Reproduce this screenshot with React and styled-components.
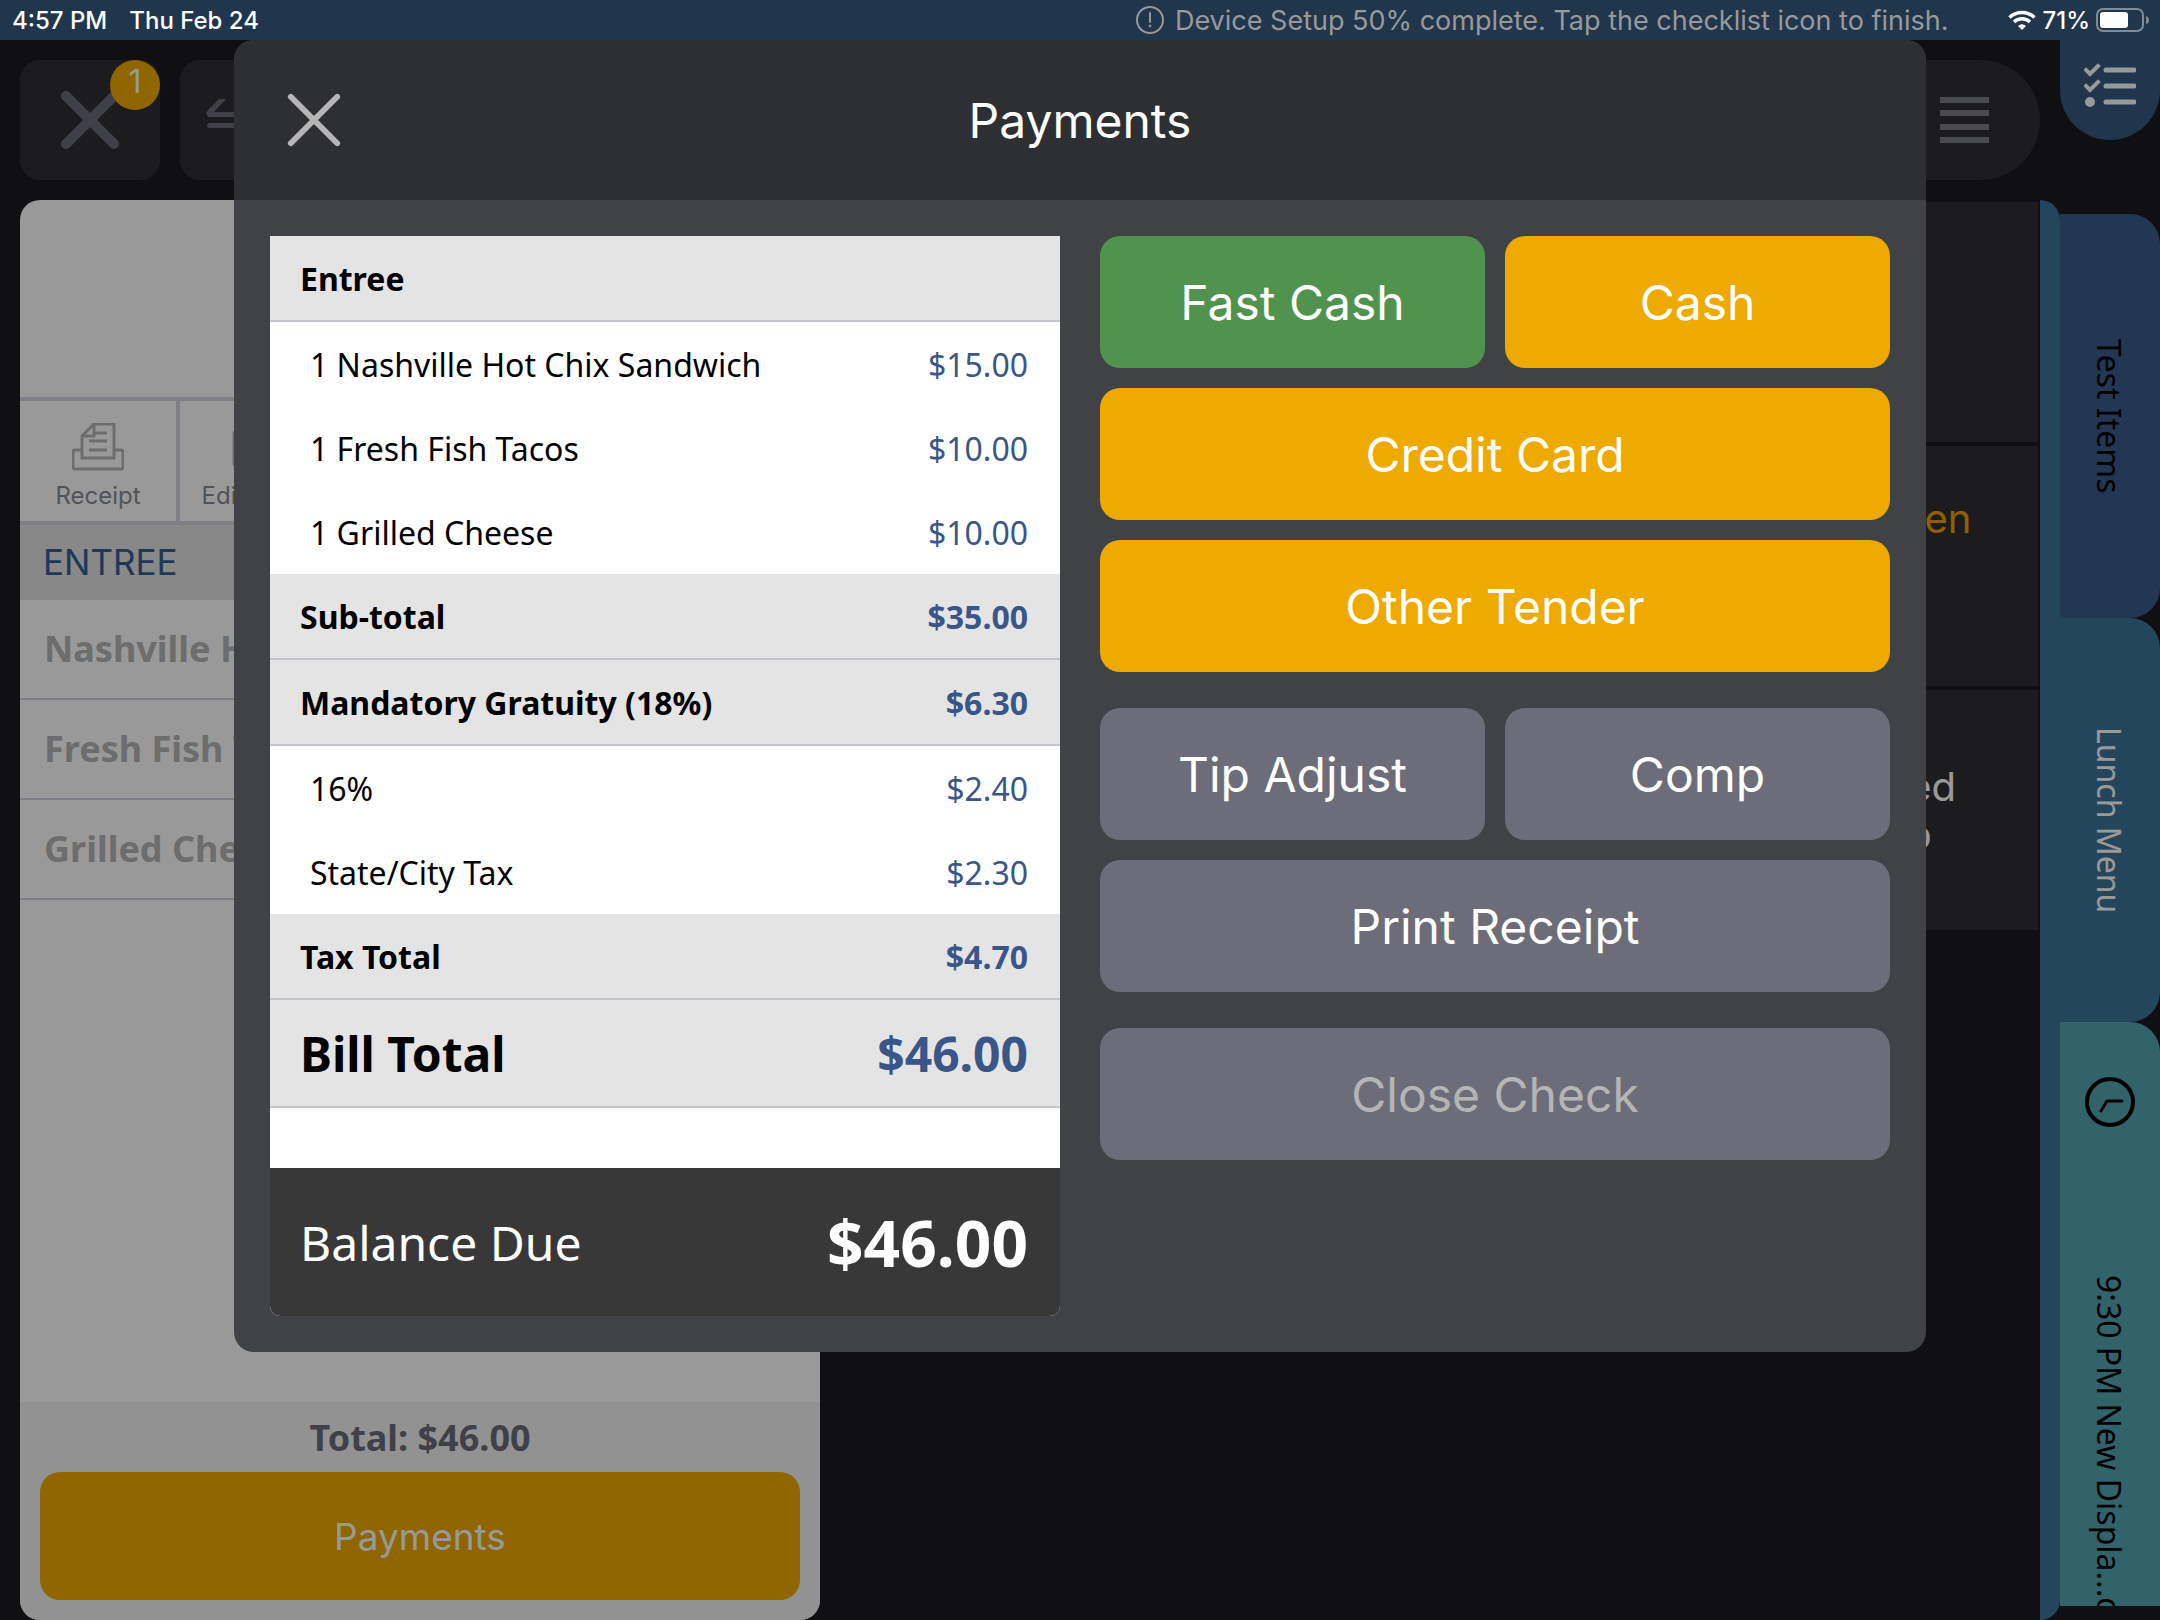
import styled, { createGlobalStyle } from "styled-components";

const GlobalStyle = createGlobalStyle`
  * {
    box-sizing: border-box;
  }

  body {
    margin: 0;
    background: #1b1b1e;
    font-family: Inter, "Liberation Sans", sans-serif;
  }

  button {
    font-family: inherit;
    padding: 0;
    border: 0;
    cursor: pointer;
  }
`;

const Screen = styled.div`
  display: flex;
  flex-direction: column;
  height: 100vh;
  overflow: hidden;
`;

const StatusBar = styled.header`
  position: relative;
  z-index: 2;
  display: flex;
  align-items: center;
  flex: none;
  height: 40px;
  padding: 0 10px 0 12px;
  background: #1f364d;
  color: #fff;
  font-size: 24px;
  font-weight: 500;
`;

const StatusDate = styled.span`
  margin-left: 22px;
`;

const StatusMessage = styled.div`
  display: flex;
  align-items: center;
  gap: 10px;
  margin-left: auto;
  color: #999;
  font-size: 27px;
  font-weight: 400;
`;

const StatusIcons = styled.div`
  display: flex;
  align-items: center;
  gap: 6px;
  margin-left: 60px;
`;

const Workspace = styled.div`
  display: flex;
  flex: 1;
  min-height: 0;
`;

const Main = styled.main`
  display: flex;
  flex-direction: column;
  flex: 1;
  gap: 20px;
  padding: 20px 0 0 20px;
`;

const Toolbar = styled.div`
  display: flex;
  gap: 20px;
  height: 120px;
`;

const ToolButton = styled.button`
  position: relative;
  display: flex;
  align-items: center;
  justify-content: center;
  width: 140px;
  border-radius: 20px;
  background: #2f2f32;
`;

const MenuButton = styled(ToolButton)`
  width: 160px;
  margin-left: auto;
  padding-left: 8px;
  border-radius: 0 60px 60px 0;
`;

const Badge = styled.span`
  position: absolute;
  top: 0;
  right: 0;
  width: 50px;
  height: 50px;
  border-radius: 50%;
  background: #eeaa00;
  color: #fff;
  font-size: 32px;
  line-height: 44px;
`;

const Columns = styled.div`
  display: flex;
  flex: 1;
  gap: 20px;
  min-height: 0;
`;

const Ticket = styled.section`
  display: flex;
  flex-direction: column;
  width: 800px;
  border-radius: 20px;
  overflow: hidden;
  background: #fff;
`;

const TicketHead = styled.div`
  height: 197px;
`;

const TicketActions = styled.div`
  display: grid;
  grid-template-columns: repeat(5, 1fr);
  height: 128px;
  border: solid #d4d4df;
  border-width: 4px 0;
`;

const TicketAction = styled.button`
  display: flex;
  flex-direction: column;
  align-items: center;
  justify-content: flex-end;
  gap: 10px;
  padding-bottom: 10px;
  border-right: 4px solid #d4d4df;
  background: none;
  color: #8a8b96;
  font-size: 24px;
  line-height: 30px;
`;

const TicketCategory = styled.h2`
  margin: 0;
  padding-left: 23px;
  background: #e3e3e3;
  color: #345f8e;
  font-size: 35px;
  font-weight: 400;
  line-height: 75px;
`;

const TicketList = styled.ul`
  flex: 1;
  margin: 0;
  padding: 0;
  list-style: none;
`;

const TicketItem = styled.li`
  padding-left: 24px;
  border-bottom: 2px solid #d4d4df;
  color: #b6b6b6;
  font: bold 36px/98px "Noto Sans", sans-serif;
`;

const TicketFooter = styled.div`
  padding: 2px 20px 20px;
  background: #f3f3f3;
`;

const TicketTotal = styled.div`
  color: #6c6d78;
  font: bold 36px/68px "Noto Sans", sans-serif;
  text-align: center;
`;

const BigButton = styled.button`
  height: ${({ $small }) => ($small ? 128 : 132)}px;
  width: 100%;
  border-radius: 20px;
  background: ${({ $color }) => $color};
  color: ${({ disabled }) => (disabled ? "#b5b5b5" : "#fff")};
  font-size: ${({ $small }) => ($small ? 37 : 48)}px;
  grid-column: ${({ $wide }) => ($wide ? "span 2" : "auto")};
`;

const MenuGrid = styled.div`
  display: grid;
  flex: 1;
  grid-template-columns: repeat(4, 1fr);
  grid-auto-rows: 240px;
  gap: 4px;
  align-content: start;
  padding: 2px 2px 0 40px;
`;

const MenuTile = styled.button`
  padding-top: 2px;
  background: #2f2f32;
  color: ${({ $highlight }) => ($highlight ? "#ee9e00" : "#fff")};
  font-size: 40px;
  line-height: 48px;
  white-space: pre-line;
`;

const Rail = styled.div`
  width: 20px;
  margin-top: 160px;
  border-radius: 0 20px 20px 0;
  background: #3c7599;
`;

const Side = styled.aside`
  display: flex;
  flex-direction: column;
  width: 100px;
  padding-bottom: 14px;
`;

const ChecklistButton = styled.button`
  flex: none;
  height: 100px;
  margin-bottom: 74px;
  padding-bottom: 8px;
  border-radius: 0 0 50px 50px;
  background: #345a80;
`;

const TabList = styled.nav`
  flex: 1;
  min-height: 0;
  overflow: hidden;
`;

const Tab = styled.button`
  display: flex;
  align-items: center;
  justify-content: ${({ $long }) => ($long ? "flex-start" : "center")};
  gap: 148px;
  width: 100%;
  height: ${({ $long }) => ($long ? 740 : 404)}px;
  padding-top: ${({ $long }) => ($long ? 55 : 0)}px;
  border-radius: 0 30px 30px 0;
  background: ${({ $color }) => $color};
  color: ${({ $dark }) => ($dark ? "#000" : "#fff")};
  font: 32px/44px "Noto Sans", sans-serif;
  flex-direction: column;

  span {
    padding-right: 2px;
    writing-mode: vertical-rl;
    white-space: nowrap;
  }
`;

const Overlay = styled.div`
  position: fixed;
  inset: 0;
  padding: 40px 234px 0;
  background: rgba(0, 0, 0, 0.4);
`;

const Modal = styled.section`
  border-radius: 20px;
  overflow: hidden;
  background: #414246;
`;

const ModalHeader = styled.div`
  display: grid;
  grid-template-columns: 160px 1fr 160px;
  align-items: center;
  height: 160px;
  background: #2e2f32;
`;

const CloseButton = styled.button`
  display: flex;
  align-items: center;
  justify-content: center;
  height: 100%;
  background: none;
`;

const ModalTitle = styled.h1`
  margin: 0;
  color: #fff;
  font-size: 48px;
  font-weight: 400;
  text-align: center;
`;

const ModalBody = styled.div`
  display: grid;
  grid-template-columns: 1fr 1fr;
  gap: 40px;
  padding: 36px;
`;

const Receipt = styled.div`
  border-radius: 0 0 10px 10px;
  overflow: hidden;
  background: #fff;
  font-family: "Noto Sans", sans-serif;
`;

const ReceiptTable = styled.table`
  width: 100%;
  margin-bottom: 60px;
  border-spacing: 0;
`;

const ReceiptRow = styled.tr`
  background: ${({ $strong }) => ($strong ? "#e4e4e4" : "#fff")};
  color: #000;
  font-size: ${({ $large }) => ($large ? 48 : 32)}px;
  font-weight: ${({ $strong }) => ($strong ? 700 : 400)};
  line-height: ${({ $large }) => ($large ? 104 : 82)}px;

  th,
  td {
    padding: 2px 32px 0 ${({ $strong }) => ($strong ? 30 : 40)}px;
    border-bottom: ${({ $strong }) => ($strong ? "2px solid #c2c5cd" : "0")};
    font-weight: inherit;
    text-align: left;
  }

  td {
    color: #3a5688;
    text-align: right;
  }
`;

const BalanceDue = styled.div`
  display: flex;
  align-items: center;
  justify-content: space-between;
  height: 148px;
  padding: 0 32px 0 30px;
  background: #383839;
  color: #fff;
  font-size: 48px;

  strong {
    font-size: 64px;
  }
`;

const ActionGroups = styled.div`
  display: flex;
  flex-direction: column;
  gap: 36px;
`;

const ActionGroup = styled.div`
  display: grid;
  grid-template-columns: 1fr 1fr;
  gap: 20px;
`;

const YELLOW = "#eeaa00";
const GRAY = "#6c6d78";

const receiptRows = [
  { label: "Entree", strong: true },
  { label: "1 Nashville Hot Chix Sandwich", amount: "$15.00" },
  { label: "1 Fresh Fish Tacos", amount: "$10.00" },
  { label: "1 Grilled Cheese", amount: "$10.00" },
  { label: "Sub-total", amount: "$35.00", strong: true },
  { label: "Mandatory Gratuity (18%)", amount: "$6.30", strong: true },
  { label: "16%", amount: "$2.40" },
  { label: "State/City Tax", amount: "$2.30" },
  { label: "Tax Total", amount: "$4.70", strong: true },
  { label: "Bill Total", amount: "$46.00", strong: true, large: true },
];

const ticketItems = [
  "Nashville Hot Chix Sandwich",
  "Fresh Fish Tacos",
  "Grilled Cheese",
];

const tiles = [
  "", "", "", "",
  "", "", "", "Chicken\nPie\nLg",
  "", "", "", "Grilled\nSub",
];

const CrossIcon = ({ size, color, width }) => (
  <svg width={size} height={size} viewBox="0 0 60 60" fill="none">
    <path
      d="M6 6 54 54M54 6 6 54"
      stroke={color}
      strokeWidth={width}
      strokeLinecap="round"
    />
  </svg>
);

const SwapIcon = () => (
  <svg width="88" height="60" viewBox="0 0 88 60" fill="#6c6d78">
    <path d="M13 9h7L8 22h74v5H3q-5-3-1-7z" />
    <path d="M3 33h82q3 3 0 6L73 50h-6L78 38H3q-4-2 0-5z" />
  </svg>
);

const MenuIcon = () => (
  <svg width="49" height="46" viewBox="0 0 49 46" fill="#7b7d80">
    <path d="M0 0h49v6H0zM0 13h49v6H0zM0 27h49v6H0zM0 40h49v6H0z" />
  </svg>
);

const ChecklistIcon = () => (
  <svg width="52" height="44" viewBox="0 0 52 44" fill="none">
    <path
      d="m2 7 4 4 8-8M2 23l4 4 8-8"
      stroke="#fff"
      strokeWidth="4"
      strokeLinecap="square"
    />
    <circle cx="6" cy="39" r="5" fill="#fff" />
    <path d="M22 7h28M22 23h28M22 39h28" stroke="#fff" strokeWidth="5" strokeLinecap="round" />
  </svg>
);

const ReceiptIcon = () => (
  <svg width="52" height="48" viewBox="0 0 52 48" fill="none" stroke="#b6b6b6" strokeWidth="3">
    <path d="M10 13 22 1h20v34H10zM22 1v12H10" />
    <path d="M10 27H3q-2 0-2 2v15q0 2 2 2h46q2 0 2-2V29q0-2-2-2h-7" />
    <path d="M22 10h13M17 18h18M17 27h18" />
  </svg>
);

const EditIcon = () => (
  <svg width="52" height="48" viewBox="0 0 52 48" fill="none" stroke="#b6b6b6" strokeWidth="3">
    <rect x="2" y="7" width="38" height="37" rx="4" />
    <path d="M18 30 43 5l5 5-25 25-7 2z" />
  </svg>
);

const InfoIcon = () => (
  <svg width="30" height="30" viewBox="0 0 30 30" fill="none" stroke="#999">
    <circle cx="15" cy="15" r="13" strokeWidth="2" />
    <path d="M15 8v9" strokeWidth="2" strokeLinecap="round" />
    <circle cx="15" cy="21" r="1" fill="#999" />
  </svg>
);

const WifiIcon = () => (
  <svg width="28" height="20" viewBox="0 0 28 20" fill="none" stroke="#fff" strokeWidth="3.4">
    <path d="M1.500 7.500a18 18 0 0 1 25 0M6 12a11.500 11.500 0 0 1 16 0" />
    <path d="m14 20-4-4a5.600 5.600 0 0 1 8 0z" fill="#fff" stroke="none" />
  </svg>
);

const BatteryIcon = () => (
  <svg width="54" height="24" viewBox="0 0 54 24" fill="none">
    <rect x="1" y="1" width="46" height="22" rx="6" stroke="#7f8d9b" strokeWidth="2" />
    <rect x="4" y="4" width="28" height="16" rx="3" fill="#fff" />
    <path d="M50 8q3 1 3 4t-3 4z" fill="#7f8d9b" />
  </svg>
);

// Turned a quarter, like the tab text
const ClockIcon = () => (
  <svg width="50" height="50" viewBox="0 0 50 50" fill="none" stroke="#000">
    <circle cx="25" cy="25" r="23" strokeWidth="4" />
    <path d="M37 24H22l-6 10" strokeWidth="3" strokeLinecap="round" strokeLinejoin="round" />
  </svg>
);

function App() {
  return (
    <Screen>
      <GlobalStyle />
      <StatusBar>
        <span>4:57 PM</span>
        <StatusDate>Thu Feb 24</StatusDate>
        <StatusMessage>
          <InfoIcon />
          Device Setup 50% complete. Tap the checklist icon to finish.
        </StatusMessage>
        <StatusIcons>
          <WifiIcon />
          <span>71%</span>
          <BatteryIcon />
        </StatusIcons>
      </StatusBar>
      <Workspace>
        <Main>
          <Toolbar>
            <ToolButton aria-label="Cancel">
              <CrossIcon size={60} color={GRAY} width={10} />
              <Badge>1</Badge>
            </ToolButton>
            <ToolButton aria-label="Transfer">
              <SwapIcon />
            </ToolButton>
            <MenuButton aria-label="Menu">
              <MenuIcon />
            </MenuButton>
          </Toolbar>
          <Columns>
            <Ticket>
              <TicketHead />
              <TicketActions>
                <TicketAction>
                  <ReceiptIcon />
                  Receipt
                </TicketAction>
                <TicketAction>
                  <EditIcon />
                  Edit Seats
                </TicketAction>
              </TicketActions>
              <TicketCategory>ENTREE</TicketCategory>
              <TicketList>
                {ticketItems.map((item) => (
                  <TicketItem key={item}>{item}</TicketItem>
                ))}
              </TicketList>
              <TicketFooter>
                <TicketTotal>Total: $46.00</TicketTotal>
                <BigButton $small $color={YELLOW}>
                  Payments
                </BigButton>
              </TicketFooter>
            </Ticket>
            <MenuGrid>
              {tiles.map((tile, i) => (
                <MenuTile key={i} $highlight={tile.startsWith("Chicken")}>
                  {tile}
                </MenuTile>
              ))}
            </MenuGrid>
          </Columns>
        </Main>
        <Rail />
        <Side>
          <ChecklistButton aria-label="Setup checklist">
            <ChecklistIcon />
          </ChecklistButton>
          <TabList>
            <Tab $color="#3a5c8a" $dark>
              <span>Test Items</span>
            </Tab>
            <Tab $color="#3c7599">
              <span>Lunch Menu</span>
            </Tab>
            <Tab $color="#55a5b1" $dark $long>
              <ClockIcon />
              <span>9:30 PM New Displa...days</span>
            </Tab>
          </TabList>
        </Side>
      </Workspace>
      <Overlay>
        <Modal role="dialog" aria-labelledby="payments-title">
          <ModalHeader>
            <CloseButton aria-label="Close">
              <CrossIcon size={58} color="#b5b5b5" width={6} />
            </CloseButton>
            <ModalTitle id="payments-title">Payments</ModalTitle>
          </ModalHeader>
          <ModalBody>
            <Receipt>
              <ReceiptTable>
                <tbody>
                  {receiptRows.map(({ label, amount, strong, large }) => (
                    <ReceiptRow key={label} $strong={strong} $large={large}>
                      <th scope="row">{label}</th>
                      <td>{amount}</td>
                    </ReceiptRow>
                  ))}
                </tbody>
              </ReceiptTable>
              <BalanceDue>
                <span>Balance Due</span>
                <strong>$46.00</strong>
              </BalanceDue>
            </Receipt>
            <ActionGroups>
              <ActionGroup>
                <BigButton $color="#51934e">Fast Cash</BigButton>
                <BigButton $color={YELLOW}>Cash</BigButton>
                <BigButton $color={YELLOW} $wide>
                  Credit Card
                </BigButton>
                <BigButton $color={YELLOW} $wide>
                  Other Tender
                </BigButton>
              </ActionGroup>
              <ActionGroup>
                <BigButton $color={GRAY}>Tip Adjust</BigButton>
                <BigButton $color={GRAY}>Comp</BigButton>
                <BigButton $color={GRAY} $wide>
                  Print Receipt
                </BigButton>
              </ActionGroup>
              <ActionGroup>
                <BigButton $color={GRAY} $wide disabled>
                  Close Check
                </BigButton>
              </ActionGroup>
            </ActionGroups>
          </ModalBody>
        </Modal>
      </Overlay>
    </Screen>
  );
}

export default App;
